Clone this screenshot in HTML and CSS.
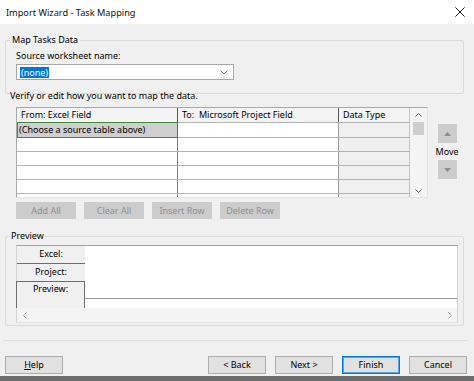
FILE: index.html
```html
<!DOCTYPE html>
<html>
<head>
<meta charset="utf-8">
<link rel="stylesheet" href="styles.css">
</head>
<body>
<div class="window">
  <div class="titlebar">
    <span class="title">Import Wizard - Task Mapping</span>
    <svg class="close" width="10" height="10" viewBox="0 0 10 10"><path d="M0.5 0.5 L9.5 9.5 M9.5 0.5 L0.5 9.5" stroke="#111" stroke-width="1" fill="none"/></svg>
  </div>
  <div class="content">
    <fieldset class="group group-map">
      <legend>Map Tasks Data</legend>
      <div class="field-label">Source worksheet name:</div>
      <div class="select">
        <span class="sel-text">(none)</span>
        <svg class="chev" width="8" height="5" viewBox="0 0 8 5"><path d="M0.5 0.5 L4 4 L7.5 0.5" stroke="#6a6a6a" stroke-width="1" fill="none"/></svg>
      </div>
    </fieldset>
    <div class="verify">Verify or edit how you want to map the data.</div>
    <div class="mapping">
      <div class="grid-wrap">
        <div class="grid">
          <div class="row head">
            <div class="cell c1">From: Excel Field</div>
            <div class="cell c2">To:&nbsp; Microsoft Project Field</div>
            <div class="cell c3">Data Type</div>
          </div>
          <div class="row first">
            <div class="cell c1 sel">(Choose a source table above)</div>
            <div class="cell c2"></div>
            <div class="cell c3"></div>
          </div>
          <div class="row"><div class="cell c1"></div><div class="cell c2"></div><div class="cell c3"></div></div>
          <div class="row"><div class="cell c1"></div><div class="cell c2"></div><div class="cell c3"></div></div>
          <div class="row"><div class="cell c1"></div><div class="cell c2"></div><div class="cell c3"></div></div>
          <div class="row"><div class="cell c1"></div><div class="cell c2"></div><div class="cell c3"></div></div>
          <div class="row"><div class="cell c1"></div><div class="cell c2"></div><div class="cell c3"></div></div>
        </div>
        <div class="vscroll">
          <svg class="arrow" width="7" height="4" viewBox="0 0 7 4"><path d="M0.5 3.5 L3.5 0.5 L6.5 3.5" stroke="#555" stroke-width="1" fill="none"/></svg>
          <div class="thumb"></div>
          <div class="track"></div>
          <svg class="arrow" width="7" height="4" viewBox="0 0 7 4"><path d="M0.5 0.5 L3.5 3.5 L6.5 0.5" stroke="#555" stroke-width="1" fill="none"/></svg>
        </div>
      </div>
      <div class="move">
        <div class="move-btn"><svg width="7" height="4" viewBox="0 0 7 4"><path d="M0 4 L3.5 0 L7 4 Z" fill="#8c8c8c"/></svg></div>
        <div class="move-label">Move</div>
        <div class="move-btn"><svg width="7" height="4" viewBox="0 0 7 4"><path d="M0 0 L3.5 4 L7 0 Z" fill="#8c8c8c"/></svg></div>
      </div>
    </div>
    <div class="actions">
      <div class="btn-dis">Add All</div>
      <div class="btn-dis">Clear All</div>
      <div class="btn-dis">Insert Row</div>
      <div class="btn-dis">Delete Row</div>
    </div>
    <fieldset class="group group-preview">
      <legend>Preview</legend>
      <div class="pv-box">
        <div class="pv-main">
          <div class="pv-labels">
            <div class="pv-l excel">Excel:</div>
            <div class="pv-l project">Project:</div>
            <div class="pv-l preview">Preview:</div>
          </div>
          <div class="pv-data"><div class="pv-top"></div><div class="pv-bottom"></div></div>
        </div>
        <div class="hscroll">
          <svg width="4" height="7" viewBox="0 0 4 7"><path d="M3.5 0.5 L0.5 3.5 L3.5 6.5" stroke="#9a9a9a" stroke-width="1" fill="none"/></svg>
          <svg width="4" height="7" viewBox="0 0 4 7"><path d="M0.5 0.5 L3.5 3.5 L0.5 6.5" stroke="#9a9a9a" stroke-width="1" fill="none"/></svg>
        </div>
      </div>
    </fieldset>
  </div>
  <div class="footer">
    <div class="sep"></div>
    <div class="buttons">
      <div class="btn"><span class="u">H</span>elp</div>
      <div class="spacer"></div>
      <div class="btn">&lt; Back</div>
      <div class="btn">Next &gt;</div>
      <div class="btn default">Finish</div>
      <div class="btn">Cancel</div>
    </div>
  </div>
  <div class="taskbar"></div>
</div>
</body>
</html>
```
FILE: styles.css
```css
* { box-sizing: border-box; }
html, body { margin: 0; padding: 0; }
body {
  font-family: "Noto Sans", "DejaVu Sans", sans-serif;
  font-size: 9px;
  color: #000;
  background: #f0f0f0;
}
.window {
  width: 474px;
  height: 381px;
  display: flex;
  flex-direction: column;
  background: #f0f0f0;
  overflow: hidden;
}
.titlebar {
  height: 24px;
  background: #fff;
  display: flex;
  align-items: center;
  justify-content: space-between;
  padding: 0 9px 0 6px;
  flex: none;
}
.title { font-size: 9.2px; color: #111; }
.close { display: block; }

.content { padding: 8px 10px 0 5px; flex: none; }

.group {
  margin: 0;
  border: 1px solid #dadada;
  min-width: 0;
  border-radius: 2px;
}
.group legend { line-height: 16px; height: 16px; }
.group-map { padding: 0 10px 13px 4px; }
.group-map legend { padding: 0 2px; }
.field-label { margin-left: 6px; line-height: 16px; height: 16px; }
.select {
  margin-left: 6px;
  width: 218px;
  height: 16px;
  background: #fff;
  border: 1px solid #a7a7a7;
  display: flex;
  align-items: center;
  justify-content: space-between;
  padding: 0 5px 0 3px;
}
.sel-text {
  background: #0078d7;
  color: #fff;
  line-height: 11px;
  padding: 0 1px;
}
.chev { display: block; }

.verify { margin-top: -5px; line-height: 14px; height: 14px; padding-left: 5px; }

.mapping {
  margin-top: 4px;
  margin-left: 11px;
  display: flex;
  align-items: flex-start;
}
.grid-wrap {
  width: 412px;
  height: 91px;
  display: flex;
  border-top: 1px solid #a9a9a9;
  border-left: 1px solid #a9a9a9;
  border-right: 1px solid #e4e4e4;
  border-bottom: 1px solid #e4e4e4;
  background: #f4f4f4;
  overflow: hidden;
}
.grid { width: 393px; flex: none; }
.row { display: flex; height: 14px; border-bottom: 1px solid #b3b3b3; }
.row.head { height: 15px; border-bottom: 1px solid #b3b3b3; background: #f4f4f4; }
.row.first { height: 15px; }
.cell { height: 100%; line-height: 13px; white-space: nowrap; overflow: hidden; }
.c1 { width: 161px; border-right: 1px solid #7b7b7b; background: #fff; padding-left: 4px; }
.c2 { width: 161px; border-right: 1px solid #9c9c9c; background: #fff; padding-left: 4px; }
.c3 { width: 71px; background: #f0f0f0; padding-left: 4px; border-right: 1px solid #c4c4c4; }
.head .cell { background: #f4f4f4; line-height: 14px; }
.head .c1 { border-right-color: #555; }
.head .c2 { border-right-color: #555; }
.cell.sel {
  background: #cfcfcf;
  border: 1px solid #3e8b3e;
  margin-top: -1px;
  height: 16px;
  padding-left: 1px;
  line-height: 13px;
}
.vscroll {
  flex: 1;
  display: flex;
  flex-direction: column;
  align-items: center;
  background: #f4f4f4;
  padding-top: 5px;
}
.vscroll .arrow { display: block; flex: none; }
.thumb { width: 11px; height: 13px; background: #cdcdcd; margin-top: 5px; flex: none; }
.track { flex: 1; }
.vscroll .arrow:last-child { margin-bottom: 4px; }

.move {
  margin-left: 9px;
  margin-top: 17px;
  display: flex;
  flex-direction: column;
  align-items: center;
  width: 20px;
}
.move-btn {
  width: 19px;
  height: 19px;
  background: #cccccc;
  display: flex;
  align-items: center;
  justify-content: center;
}
.move-btn svg { display: block; }
.move-label { line-height: 17px; height: 17px; }

.actions {
  display: flex;
  gap: 8px;
  margin-top: 4px;
  margin-left: 11px;
}
.btn-dis {
  width: 60px;
  height: 17px;
  background: #cccccc;
  color: #8f8f8f;
  text-align: center;
  line-height: 17px;
}

.group-preview { margin-top: 9px; padding: 1px 5px 2px 4px; }
.group-preview legend { padding: 0 1px; }
.pv-box {
  margin-left: 6px;
  width: 442px;
  height: 78px;
  border-top: 1px solid #a3a3a3;
  border-left: 1px solid #d4d4d4;
  border-right: 1px solid #d4d4d4;
  border-bottom: 1px solid #e2e2e2;
  display: flex;
  flex-direction: column;
  background: #fff;
}
.pv-main { display: flex; height: 62px; flex: none; }
.pv-labels { width: 68px; flex: none; display: flex; flex-direction: column; }
.pv-l { background: #f0f0f0; text-align: center; }
.pv-l.excel { height: 17px; line-height: 16px; }
.pv-l.project { height: 18px; line-height: 16px; border-top: 1px solid #6e6e6e; }
.pv-l.preview {
  flex: 1;
  line-height: 14px;
  border-top: 1px solid #6e6e6e;
  border-left: 1px solid #6e6e6e;
  border-right: 1px solid #6e6e6e;
  margin-left: -1px;
}
.pv-data { flex: 1; display: flex; flex-direction: column; }
.pv-top { height: 53px; border-bottom: 1px solid #9a9a9a; }
.pv-bottom { flex: 1; }
.hscroll {
  flex: 1;
  background: #f4f4f4;
  display: flex;
  align-items: center;
  justify-content: space-between;
  padding: 0 5px 0 6px;
}
.hscroll svg { display: block; }

.footer { flex: none; margin-top: 14px; }
.sep { height: 1px; background: #dedede; margin: 0 6px 0 3px; }
.buttons {
  display: flex;
  gap: 9px;
  margin-top: 15px;
  padding: 0 7px 0 5px;
}
.spacer { flex: 1; margin-left: -9px; }
.btn {
  width: 58px;
  height: 18px;
  background: #e1e1e1;
  border: 1px solid #adadad;
  text-align: center;
  line-height: 16px;
}
.btn.default { border-color: #0078d7; box-shadow: inset 0 0 0 1px #5ca5e3; }
.u { text-decoration: underline; }
.taskbar { margin-top: auto; height: 5px; background: #6d6d6d; flex: none; }
```
